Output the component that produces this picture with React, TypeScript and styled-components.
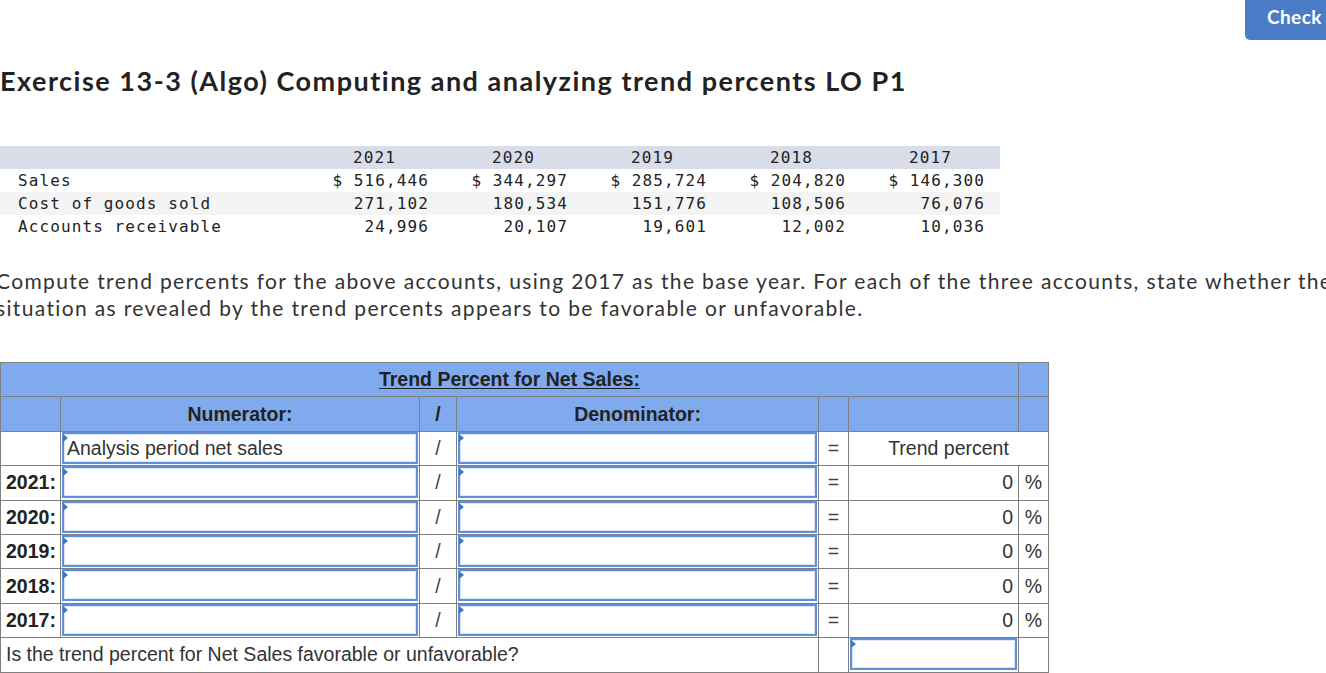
import styled, { createGlobalStyle } from "styled-components";

const GlobalStyle = createGlobalStyle`
  html, body {
    margin: 0;
    padding: 0;
    background: #fff;
    overflow: hidden;
  }
`;

const Page = styled.div`
  width: 1350px;
  margin-left: -4px;
  font-family: Lato, "Open Sans", sans-serif;
  color: #222;
`;

const TopBar = styled.div`
  display: flex;
  justify-content: flex-end;
  height: 40px;
`;

const CheckButton = styled.button`
  width: 101px;
  height: 40px;
  border: none;
  border-radius: 0 0 5px 5px;
  background: #4a7cc7;
  color: #fff;
  font-family: Lato, sans-serif;
  font-weight: 700;
  font-size: 19px;
  letter-spacing: 0.4px;
  text-align: left;
  padding: 0 0 7px 22px;
`;

const Title = styled.h1`
  margin: 21px 0 0 4px;
  font-size: 27px;
  line-height: 40px;
  font-weight: 700;
  letter-spacing: 1.5px;
  color: #222;
`;

const DataTable = styled.table`
  margin: 45px 0 0 4px;
  width: 1000px;
  border-collapse: collapse;
  font-family: "DejaVu Sans Mono", "Liberation Mono", monospace;
  font-size: 16px;
  letter-spacing: 1.1px;
  color: #222;

  th,
  td {
    height: 23px;
    padding: 0;
    font-weight: 400;
    white-space: pre;
  }
  th {
    background: #d9dce9;
    text-align: center;
    width: 139px;
  }
  th:first-child {
    width: auto;
  }
  td {
    text-align: right;
    padding-right: 15px;
  }
  td:first-child {
    text-align: left;
    padding-left: 18px;
  }
  tbody tr:nth-child(2) td {
    background: #f4f4f4;
  }
`;

const Prompt = styled.p`
  margin: 29px 0 0 0;
  font-size: 21px;
  line-height: 27px;
  letter-spacing: 1.35px;
  color: #333;
  white-space: nowrap;
`;

const TrendTable = styled.table`
  margin: 41px 0 0 4px;
  border-collapse: collapse;
  table-layout: fixed;
  font-family: "Liberation Sans", Arial, sans-serif;
  font-size: 19.5px;
  color: #222;

  td {
    border: 1px solid #808080;
    height: 33.4px;
    padding: 0;
  }
`;

const HeadRow = styled.tr`
  td {
    background: #7faaee;
    font-weight: 700;
    text-align: center;
  }
`;

const Caption = styled.span`
  text-decoration: underline;
  text-underline-offset: 2px;
`;

const YearCell = styled.td`
  font-weight: 700;
  padding-left: 5px !important;
`;

const Sign = styled.td`
  text-align: center;
  color: #444;
`;

const ValueCell = styled.td`
  text-align: right;
  padding-right: 5px !important;
  color: #333;
`;

const Plain = styled.td`
  text-align: left;
  padding-left: 5px !important;
  color: #333;
`;

const Centered = styled.td`
  text-align: center;
  color: #333;
`;

const InputCell = styled.td`
  vertical-align: top;
`;

const Field = styled.div`
  position: relative;
  box-sizing: border-box;
  height: 32px;
  margin: 0 1px;
  border: 2px solid #5f8fd8;
  box-shadow: inset 0 0 0 1px #dbe6f8;
  background: #fff;
  padding-left: 3px;
  line-height: 28px;
  color: #333;

  &::before {
    content: "";
    position: absolute;
    left: -1px;
    top: 0;
    border-top: 4px solid transparent;
    border-bottom: 4px solid transparent;
    border-left: 5px solid #3f74c8;
  }
`;

const years = ["2021", "2020", "2019", "2018", "2017"];

const data = [
  ["Sales", "$ 516,446", "$ 344,297", "$ 285,724", "$ 204,820", "$ 146,300"],
  ["Cost of goods sold", "271,102", "180,534", "151,776", "108,506", "76,076"],
  ["Accounts receivable", "24,996", "20,107", "19,601", "12,002", "10,036"],
];

export default function App() {
  return (
    <>
      <GlobalStyle />
      <Page>
        <TopBar>
          <CheckButton>Check</CheckButton>
        </TopBar>
        <Title>Exercise 13-3 (Algo) Computing and analyzing trend percents LO P1</Title>

        <DataTable>
          <thead>
            <tr>
              <th />
              {years.map((y) => (
                <th key={y}>{y}</th>
              ))}
            </tr>
          </thead>
          <tbody>
            {data.map((row) => (
              <tr key={row[0]}>
                {row.map((c, i) => (
                  <td key={i}>{c}</td>
                ))}
              </tr>
            ))}
          </tbody>
        </DataTable>

        <Prompt>
          Compute trend percents for the above accounts, using 2017 as the base year. For each of the three accounts, state whether the
          <br />
          situation as revealed by the trend percents appears to be favorable or unfavorable.
        </Prompt>

        <TrendTable>
          <colgroup>
            <col style={{ width: 60 }} />
            <col style={{ width: 359 }} />
            <col style={{ width: 37 }} />
            <col style={{ width: 362 }} />
            <col style={{ width: 30 }} />
            <col style={{ width: 170 }} />
            <col style={{ width: 30 }} />
          </colgroup>
          <tbody>
            <HeadRow>
              <td colSpan={6}>
                <Caption>Trend Percent for Net Sales:</Caption>
              </td>
              <td />
            </HeadRow>
            <HeadRow>
              <td />
              <td>Numerator:</td>
              <td>/</td>
              <td>Denominator:</td>
              <td />
              <td />
              <td />
            </HeadRow>
            <tr>
              <td />
              <InputCell>
                <Field>Analysis period net sales</Field>
              </InputCell>
              <Sign>/</Sign>
              <InputCell>
                <Field />
              </InputCell>
              <Sign>=</Sign>
              <Centered colSpan={2}>Trend percent</Centered>
            </tr>
            {years.map((y) => (
              <tr key={y}>
                <YearCell>{y}:</YearCell>
                <InputCell>
                  <Field />
                </InputCell>
                <Sign>/</Sign>
                <InputCell>
                  <Field />
                </InputCell>
                <Sign>=</Sign>
                <ValueCell>0</ValueCell>
                <Centered>%</Centered>
              </tr>
            ))}
            <tr>
              <Plain colSpan={4}>Is the trend percent for Net Sales favorable or unfavorable?</Plain>
              <td />
              <InputCell>
                <Field />
              </InputCell>
              <td />
            </tr>
          </tbody>
        </TrendTable>
      </Page>
    </>
  );
}
